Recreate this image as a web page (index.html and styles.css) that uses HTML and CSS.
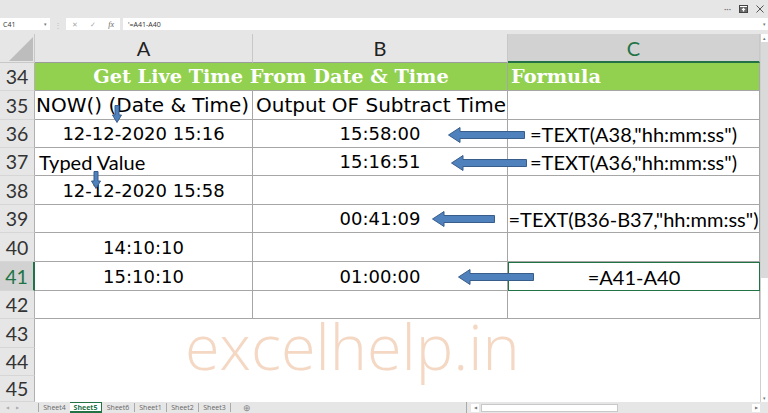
FILE: index.html
```html
<!DOCTYPE html>
<html>
<head>
<title>Get Live Time From Date & Time</title>
<meta charset="utf-8">
<link rel="stylesheet" href="styles.css">
</head>
<body>

<div class="titlebar">
<span class="dots">&middot;&middot;&middot;</span>
<svg class="ribbon-icon" width="9" height="8" viewBox="0 0 9 8"><rect x="0.5" y="0.5" width="8" height="7" fill="#fff" stroke="#444"/><rect x="1" y="2" width="7" height="5" fill="#6b6b6b"/><path d="M4.5 2.5 L6.5 5 H5.2 V6.6 H3.8 V5 H2.5 Z" fill="#fff"/></svg>
<svg class="close-icon" width="8" height="8" viewBox="0 0 8 8"><path d="M0.5 0.5 L7.5 7.5 M7.5 0.5 L0.5 7.5" stroke="#555" stroke-width="1"/></svg>
</div>

<div class="formula-bar">
<div class="namebox">C41<span class="dd">&#9662;</span></div>
<div class="fsep">&#8942;</div>
<div class="fx-box">
<span>&#10005;</span><span>&#10003;</span><span class="fx">fx</span>
</div>
<div class="formula">'=A41-A40<span class="dd">&#9662;</span></div>
</div>

<div class="gap"></div>

<div class="sheet">
<div class="corner"><svg width="24" height="24" viewBox="0 0 24 24"><polygon points="24,0 24,24 0,24" fill="#bdbdbd"/></svg></div>
<div class="colhead">A</div>
<div class="colhead">B</div>
<div class="colhead sel">C</div>
<div class="vscroll"><div class="vbtn">&#9652;</div><div class="vthumb"></div><div class="vtrack"></div><div class="vbtn">&#9662;</div></div>

<div class="rowhead">34</div>
<div class="cell title span2 center">Get Live Time From Date &amp; Time</div>
<div class="cell title pad">Formula</div>

<div class="rowhead">35</div>
<div class="cell head tight">NOW() (Date &amp; Time)</div>
<div class="cell head pad">Output OF Subtract Time</div>
<div class="cell"></div>

<div class="rowhead">36</div>
<div class="cell center">12-12-2020 15:16</div>
<div class="cell center">15:58:00</div>
<div class="cell calibri center">=TEXT(A38,"hh:mm:ss")</div>

<div class="rowhead">37</div>
<div class="cell calibri typed">Typed Value</div>
<div class="cell center">15:16:51</div>
<div class="cell calibri center">=TEXT(A36,"hh:mm:ss")</div>

<div class="rowhead">38</div>
<div class="cell center">12-12-2020 15:58</div>
<div class="cell"></div>
<div class="cell"></div>

<div class="rowhead">39</div>
<div class="cell"></div>
<div class="cell center">00:41:09</div>
<div class="cell calibri center">=TEXT(B36-B37,"hh:mm:ss")</div>

<div class="rowhead">40</div>
<div class="cell center">14:10:10</div>
<div class="cell"></div>
<div class="cell"></div>

<div class="rowhead sel">41</div>
<div class="cell center">15:10:10</div>
<div class="cell center">01:00:00</div>
<div class="cell calibri center active">=A41-A40</div>

<div class="rowhead">42</div>
<div class="cell"></div>
<div class="cell"></div>
<div class="cell"></div>

<div class="rowhead">43</div>
<div class="blank"></div>
<div class="blank"></div>
<div class="blank"></div>

<div class="rowhead">44</div>
<div class="blank"></div>
<div class="blank"></div>
<div class="blank"></div>

<div class="rowhead last">45</div>
<div class="blank"></div>
<div class="blank"></div>
<div class="blank"></div>

<!-- shapes drawn on top of the cells -->
<svg class="arrow-left a1" width="77" height="16" viewBox="0 0 77 16"><path d="M0.5 8 L12 0.5 V4.5 H76.5 V11.5 H12 V15.5 Z"/></svg>
<svg class="arrow-left a2" width="76" height="16" viewBox="0 0 76 16"><path d="M0.5 8 L12 0.5 V4.5 H75.5 V11.5 H12 V15.5 Z"/></svg>
<svg class="arrow-left a3" width="63" height="16" viewBox="0 0 63 16"><path d="M0.5 8 L12 0.5 V4.5 H62.5 V11.5 H12 V15.5 Z"/></svg>
<svg class="arrow-left a4" width="76" height="16" viewBox="0 0 76 16"><path d="M0.5 8 L12 0.5 V4.5 H75.5 V11.5 H12 V15.5 Z"/></svg>
<svg class="arrow-down d1" width="10" height="18" viewBox="0 0 10 18"><path d="M3 0.5 H7 V10 H9.5 L5 17.5 L0.5 10 H3 Z"/></svg>
<svg class="arrow-down d2" width="10" height="18" viewBox="0 0 10 18"><path d="M3 0.5 H7 V10 H9.5 L5 17.5 L0.5 10 H3 Z"/></svg>

<div class="watermark">excelhelp.in</div>
</div>

<div class="tabbar">
<div class="tabnav"><span>&#9664;</span><span>&#9654;</span></div>
<div class="tab">Sheet4</div>
<div class="tab active">Sheet5</div>
<div class="tab">Sheet6</div>
<div class="tab">Sheet1</div>
<div class="tab">Sheet2</div>
<div class="tab">Sheet3</div>
<div class="addsheet">&#8853;</div>
<div class="hscroll">
<div class="hbtn">&#9664;</div>
<div class="hthumb"></div>
<div class="htrack"></div>
<div class="hbtn">&#9654;</div>
</div>
</div>

</body>
</html>
```

FILE: styles.css
```css
*
{
padding:0;
margin:0;
box-sizing:border-box;
}

:root
{
--chrome-bg:#e6e6e6;
--grid-line:#a6a6a6;
--head-line:#c8c8c8;
--excel-green:#217346;
--title-green:#92d050;
--arrow-fill:#4f81bd;
--arrow-line:#385d8a;
}

body
{
width:768px;
height:413px;
overflow:hidden;
background-color:var(--chrome-bg);
font-family:"Lato",sans-serif;
display:flex;
flex-direction:column;
}

/* window title strip */
.titlebar
{
height:18px;
display:flex;
justify-content:flex-end;
align-items:center;
gap:8px;
padding-right:4px;
color:#666;
}

.dots
{
font-size:9px;
color:#777;
margin-top:-2px;
}

/* formula bar */
.formula-bar
{
height:12px;
display:flex;
font-family:"Open Sans",sans-serif;
font-size:7px;
color:#333;
}

.namebox
{
width:50px;
background-color:#fff;
display:flex;
align-items:center;
justify-content:space-between;
padding:0 3px;
}

.dd
{
font-size:5px;
color:#777;
}

.fsep
{
width:16px;
display:flex;
align-items:center;
justify-content:center;
color:#bbb;
font-size:8px;
}

.fx-box
{
width:54px;
background-color:#fff;
display:flex;
align-items:center;
justify-content:space-around;
color:#aaa;
font-size:7px;
}

.fx-box .fx
{
font-family:"Liberation Serif",serif;
font-style:italic;
color:#666;
font-size:8px;
}

.formula
{
flex:1;
margin-left:3px;
background-color:#fff;
display:flex;
align-items:center;
justify-content:space-between;
padding:0 2px 0 5px;
}

.gap
{
height:4px;
}

/* the worksheet */
.sheet
{
position:relative;
height:368px;
display:grid;
grid-template-columns:35px 218px 255px 252px 8px;
grid-template-rows:29px 28px 29px 28px 28px 29px 28px 29px 29px 28px 29px 28px 26px;
background-color:#fff;
overflow:hidden;
}

.corner
{
background-color:var(--chrome-bg);
border-right:1px solid var(--head-line);
border-bottom:1px solid var(--head-line);
display:flex;
align-items:flex-end;
justify-content:flex-end;
padding:0 1px 1px 0;
}

.colhead
{
background-color:var(--chrome-bg);
border-right:1px solid var(--head-line);
border-bottom:1px solid #9c9c9c;
display:flex;
align-items:center;
justify-content:center;
font-size:20px;
color:#222;
}

.colhead.sel
{
background-color:#d2d2d2;
color:var(--excel-green);
border-bottom:2px solid var(--excel-green);
}

.rowhead
{
background-color:var(--chrome-bg);
border-right:1px solid #b0b0b0;
border-bottom:1px solid #d6d6d6;
display:flex;
align-items:center;
justify-content:center;
font-size:19.5px;
color:#333;
}

.rowhead.sel
{
background-color:#d2d2d2;
color:var(--excel-green);
border-right:2px solid var(--excel-green);
}

.rowhead.last
{
align-items:flex-start;
padding-top:1px;
}

.vscroll
{
grid-column:5;
grid-row:1 / span 13;
display:flex;
flex-direction:column;
background-color:#fff;
border-left:1px solid #d0d0d0;
}

.vbtn
{
height:8px;
font-size:5px;
color:#777;
display:flex;
align-items:center;
justify-content:center;
}

.vthumb
{
height:236px;
background-color:#dadada;
}

.vtrack
{
flex:1;
}

.cell
{
border-right:1px solid var(--grid-line);
border-bottom:1px solid var(--grid-line);
display:flex;
align-items:center;
white-space:nowrap;
font-family:"DejaVu Sans",sans-serif;
font-size:18px;
color:#000;
}

.span2
{
grid-column:span 2;
}

.center
{
justify-content:center;
}

.pad
{
padding-left:3px;
}

.tight
{
padding-left:1px;
}

.title
{
background-color:var(--title-green);
color:#fff;
font-family:"DejaVu Serif",serif;
font-weight:bold;
font-size:19.3px;
}

.head
{
font-size:20px;
}

.calibri
{
font-family:"Lato",sans-serif;
font-size:20px;
}

.typed
{
padding-left:4px;
}

.active
{
border:1px solid var(--excel-green);
}

.blank
{
background-color:#fff;
}

/* floating shapes */
.arrow-left,
.arrow-down
{
position:absolute;
fill:var(--arrow-fill);
stroke:var(--arrow-line);
stroke-width:1;
}

.a1 { left:448px; top:93px; }
.a2 { left:451px; top:121px; }
.a3 { left:432px; top:177px; }
.a4 { left:458px; top:235px; }
.d1 { left:112px; top:71px; }
.d2 { left:91px; top:137px; }

.watermark
{
position:absolute;
left:185px;
top:280px;
font-family:"Open Sans",sans-serif;
font-weight:300;
font-size:63px;
line-height:1;
color:#f4d8c4;
}

/* sheet tabs + horizontal scroll */
.tabbar
{
height:11px;
display:flex;
align-items:stretch;
font-family:"Open Sans",sans-serif;
font-size:7px;
color:#666;
}

.tabnav
{
width:38px;
display:flex;
align-items:center;
gap:7px;
padding-left:6px;
font-size:4px;
color:#aaa;
}

.tab
{
width:32px;
border-left:1px solid #aaa;
display:flex;
align-items:center;
justify-content:center;
margin:1px 0;
}

.tab.active
{
background-color:#fff;
color:var(--excel-green);
font-weight:bold;
border-left:none;
border-bottom:2px solid var(--excel-green);
margin:0;
}

.tab.active + .tab
{
border-left:none;
}

.addsheet
{
width:32px;
border-left:1px solid #aaa;
margin:1px 0;
display:flex;
align-items:center;
justify-content:center;
font-size:9px;
color:#888;
}

.hscroll
{
flex:1;
margin-left:204px;
border-left:1px solid #aaa;
display:flex;
align-items:center;
padding-left:4px;
padding-right:8px;
}

.hbtn
{
width:8px;
height:8px;
font-size:4px;
color:#777;
display:flex;
align-items:center;
justify-content:center;
background-color:#fff;
}

.hthumb
{
width:137px;
height:8px;
background-color:#fff;
border:1px solid #c8c8c8;
margin-left:2px;
}

.htrack
{
flex:1;
}
```
